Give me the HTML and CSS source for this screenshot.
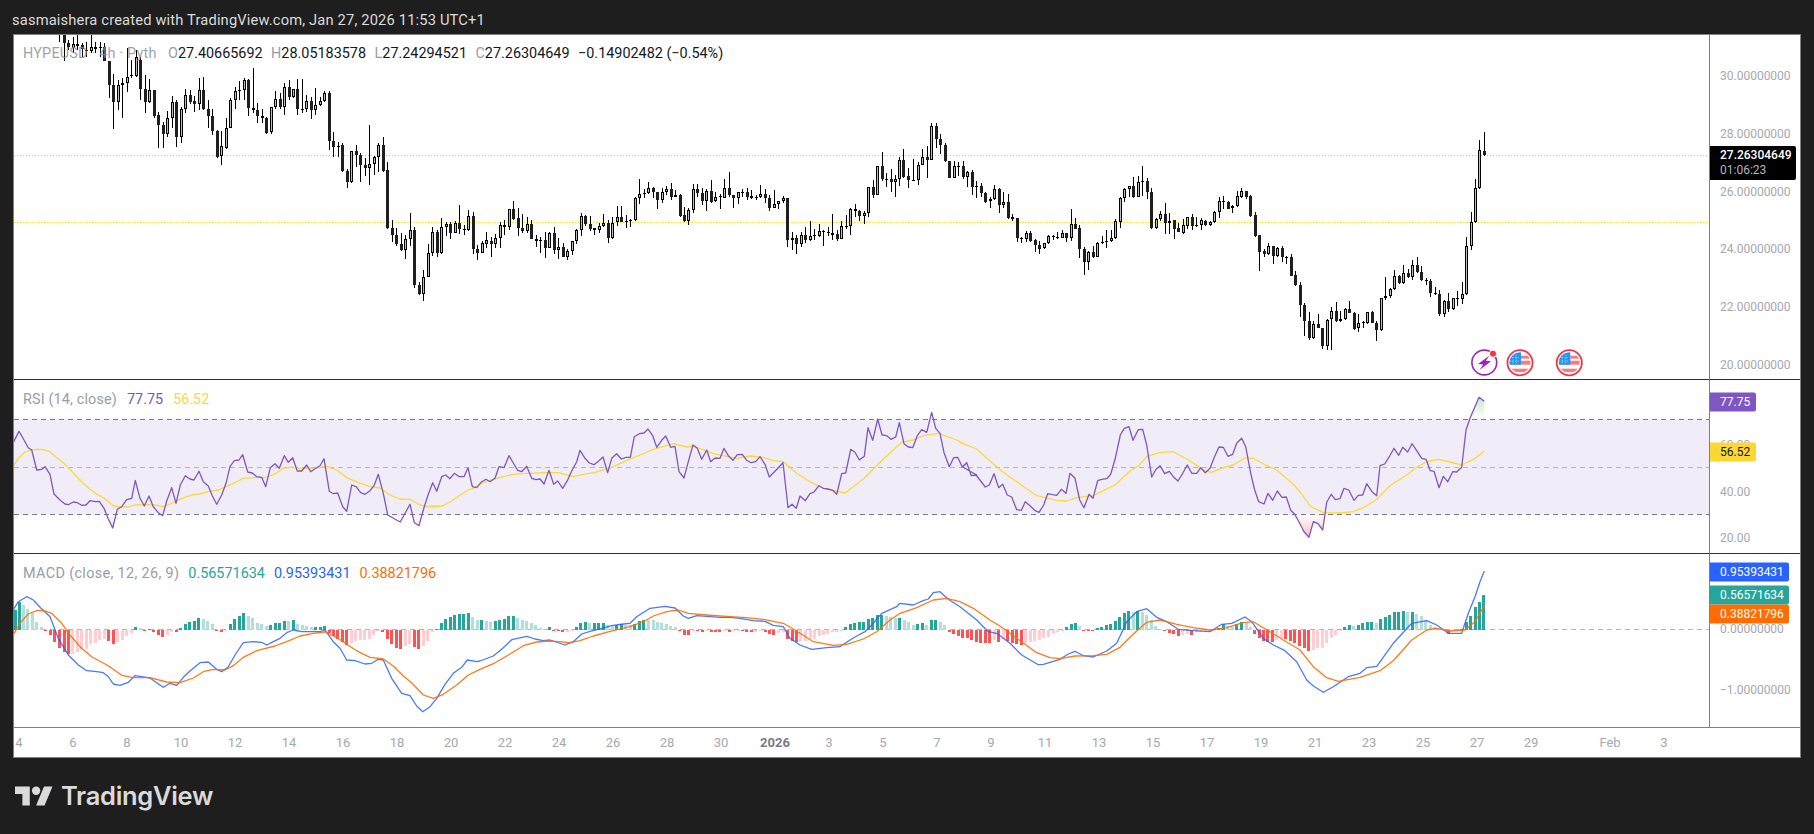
FILE: index.html
```html
<!DOCTYPE html>
<html lang="en">
<head>
<meta charset="utf-8">
<title>HYPEUSD 4h chart</title>
<link rel="stylesheet" href="styles.css">
</head>
<body>
<div class="page">
  <header class="header">sasmaishera created with TradingView.com, Jan 27, 2026 11:53 UTC+1</header>
  <main class="frame">
    <section class="pane pane-main">
      <svg class="plot" viewBox="14 35 1695 344" width="1695" height="344">
        <line class="price-line" x1="14" x2="1709" y1="155.5" y2="155.5"/>
        <line class="level-line" x1="14" x2="1709" y1="222.5" y2="222.5"/>
        <g id="candles"></g>
        <g class="icon-bolt">
          <circle class="bolt-ring" cx="1484.3" cy="362.5" r="12.4"/>
          <path class="bolt-shape" d="M1489.5 355.5 L1478 364 L1483.2 364.4 L1479.5 370 L1491 361.2 L1485.8 360.8 Z"/>
          <circle class="bolt-dot" cx="1493" cy="353.7" r="3.6"/>
        </g>
        <defs>
          <clipPath id="flag-clip"><circle r="10.5"/></clipPath>
          <g id="flag">
            <circle class="flag-ring" r="12.6"/>
            <g clip-path="url(#flag-clip)">
              <rect class="flag-white" x="-11" y="-11" width="22" height="22"/>
              <rect class="flag-red" x="1" y="-7" width="10" height="3"/>
              <rect class="flag-red" x="-11" y="-2" width="22" height="4"/>
              <rect class="flag-red" x="-11" y="6" width="22" height="3.5"/>
              <rect class="flag-blue" x="-11" y="-11" width="12" height="13"/>
              <path class="flag-stars" d="M-7 -8v9M-3.5 -8v9M-10 -5h10M-10 -1.5h10"/>
            </g>
          </g>
        </defs>
        <use href="#flag" x="1520" y="362.7"/>
        <use href="#flag" x="1569.3" y="362.7"/>
      </svg>
      <div class="legend legend-main">
        <span class="mute title">HYPEUSD · 4h · Pyth</span>
        <span class="ohlc"><i>O</i>27.40665692</span>
        <span class="ohlc"><i>H</i>28.05183578</span>
        <span class="ohlc"><i>L</i>27.24294521</span>
        <span class="ohlc"><i>C</i>27.26304649</span>
        <span class="ohlc">−0.14902482 (−0.54%)</span>
      </div>
    </section>
    <aside class="axis axis-main">
      <span class="tick" data-y="75">30.00000000</span>
      <span class="tick" data-y="133">28.00000000</span>
      <span class="tick" data-y="191">26.00000000</span>
      <span class="tick" data-y="248">24.00000000</span>
      <span class="tick" data-y="306">22.00000000</span>
      <span class="tick" data-y="364">20.00000000</span>
      <div class="badge badge-now" data-y="163"><b>27.26304649</b><span>01:06:23</span></div>
    </aside>

    <section class="pane pane-rsi">
      <svg class="plot" viewBox="14 380 1695 173" width="1695" height="173" id="rsi"></svg>
      <div class="legend legend-ind">
        <span class="mute">RSI (14, close)</span>
        <span class="c-purple">77.75</span>
        <span class="c-yellow">56.52</span>
      </div>
    </section>
    <aside class="axis axis-rsi">
      <span class="tick" data-y="397">80.00</span>
      <span class="tick" data-y="444">60.00</span>
      <span class="tick" data-y="491">40.00</span>
      <span class="tick" data-y="537">20.00</span>
      <span class="badge b-short b-purple" data-y="401.5">77.75</span>
      <span class="badge b-short b-yellow" data-y="451.5">56.52</span>
    </aside>

    <section class="pane pane-macd">
      <svg class="plot" viewBox="14 554 1695 173" width="1695" height="173" id="macd"></svg>
      <div class="legend legend-ind">
        <span class="mute">MACD (close, 12, 26, 9)</span>
        <span class="c-teal">0.56571634</span>
        <span class="c-blue">0.95393431</span>
        <span class="c-orange">0.38821796</span>
      </div>
    </section>
    <aside class="axis axis-macd">
      <span class="tick" data-y="628">0.00000000</span>
      <span class="tick" data-y="689">−1.00000000</span>
      <span class="badge b-long b-blue" data-y="571.5">0.95393431</span>
      <span class="badge b-long b-teal" data-y="595">0.56571634</span>
      <span class="badge b-long b-orange" data-y="613.5">0.38821796</span>
    </aside>

    <footer class="times">
      <span data-x="19">4</span><span data-x="73">6</span><span data-x="127">8</span><span data-x="181">10</span>
      <span data-x="235">12</span><span data-x="289">14</span><span data-x="343">16</span><span data-x="397">18</span>
      <span data-x="451">20</span><span data-x="505">22</span><span data-x="559">24</span><span data-x="613">26</span>
      <span data-x="667">28</span><span data-x="721">30</span><span data-x="775" class="year">2026</span><span data-x="829">3</span>
      <span data-x="883">5</span><span data-x="937">7</span><span data-x="991">9</span><span data-x="1045">11</span>
      <span data-x="1099">13</span><span data-x="1153">15</span><span data-x="1207">17</span><span data-x="1261">19</span>
      <span data-x="1315">21</span><span data-x="1369">23</span><span data-x="1423">25</span><span data-x="1477">27</span>
      <span data-x="1531">29</span><span data-x="1610">Feb</span><span data-x="1664">3</span>
    </footer>
  </main>
  <div class="brand">
    <svg class="brand-mark" viewBox="0 4 36 18" width="38" height="20">
      <path d="M14 22H7V11H0V4h14v18zM28 22h-8l7.5-18h8L28 22z"/>
      <circle cx="20" cy="8" r="4"/>
    </svg>
    <span class="brand-name">TradingView</span>
  </div>
</div>
<script src="chart.js"></script>
</body>
</html>
```

FILE: styles.css
```css
* { box-sizing: border-box; }
html, body { margin: 0; height: 100%; }
body { background: #1e1e1e; font-family: Roboto, "Liberation Sans", sans-serif; overflow: hidden; }
.page { display: flex; flex-direction: column; height: 834px; padding: 0 13px; }

.header { height: 34px; padding-top: 11px; color: #dcdcdc; font-size: 14.7px; line-height: 18px; letter-spacing: .16px; white-space: nowrap; margin-left: -1px; }

.frame { width: 1788px; height: 724px; border: 1px solid #808080; background: #fff; display: grid; grid-template-columns: 1695px 91px; grid-template-rows: 345px 174px 174px 29px; }
.pane { position: relative; overflow: hidden; border-bottom: 1px solid #2a2e39; }
.pane-macd { border-bottom-color: #808080; }
.plot { display: block; }
.axis { position: relative; border-left: 1px solid #808080; border-bottom: 1px solid #2a2e39; overflow: hidden; }
.axis-macd { border-bottom-color: #808080; }

.tick { position: absolute; left: 10px; height: 16px; margin-top: 1px; line-height: 16px; font-size: 12px; color: #a6a8b0; transform: translateY(-50%); white-space: nowrap; }
.badge { position: absolute; left: 0; transform: translateY(-50%); font-size: 12px; padding-left: 10px; white-space: nowrap; border-radius: 0 2px 2px 0; }
.badge-now { width: 86px; height: 34px; background: #000; display: flex; flex-direction: column; justify-content: center; line-height: 15px; color: #fff; }
.badge-now b { font-weight: 500; }
.badge-now span { color: #b2b5be; }
.b-short { width: 46px; height: 19px; line-height: 19px; color: #fff; }
.b-long { width: 79px; height: 19px; line-height: 19px; color: #fff; }
.b-purple { background: #7e57c2; }
.b-yellow { background: #fdd835; color: #131722; }
.b-blue { background: #2962ff; }
.b-teal { background: #26a69a; }
.b-orange { background: #ff6d00; }

.legend { position: absolute; left: 9px; display: flex; font-size: 14.4px; line-height: 18px; white-space: nowrap; color: #131722; }
.legend-main { top: 10px; gap: 8.5px; }
.legend-main .title { min-width: 136.5px; letter-spacing: .2px; }
.legend-ind { top: 11px; gap: 10px; }
.pane-macd .legend-ind { gap: 9px; }
.legend-ind .mute { letter-spacing: .15px; }
.pane-macd .legend-ind .mute { letter-spacing: .35px; }
.mute, .ohlc i { color: #9a9ca6; font-style: normal; }
.pane-main .mute { color: rgba(140,143,153,.85); }
.c-purple { color: #7e57c2; }
.c-yellow { color: #fdd835; }
.c-teal { color: #26a69a; }
.c-blue { color: #2962ff; }
.c-orange { color: #ff6d00; }

.times { grid-column: 1 / 3; position: relative; font-size: 13px; color: #a6a8b0; }
.times span { position: absolute; top: 7px; line-height: 16px; transform: translateX(-50%); }
.times .year { font-weight: 700; color: #787b86; }

.brand { display: flex; align-items: center; height: 76px; padding: 0 0 0 2px; color: #dadada; gap: 8px; }
.brand-mark { fill: #dadada; display: block; margin-top: -1px; }
.brand-name { font-family: Inter, "Liberation Sans", sans-serif; font-weight: 600; font-size: 25.5px; letter-spacing: -.3px; margin-top: -1px; }

.price-line { stroke: #bdbdbd; stroke-width: 1; stroke-dasharray: 1 2; }
.level-line { stroke: #ffe600; stroke-width: 1; stroke-dasharray: 1.5 1.5; }
.c-wick, .c-solid { fill: #000; }
.c-down { fill: #1f1f1f; }
.c-up { fill: #000; }
.c-in { fill: #bdbdbd; }
#candles { shape-rendering: crispEdges; }

.bolt-ring { fill: #fff; stroke: #9c27b0; stroke-width: 1.6; }
.bolt-shape { fill: #9c27b0; }
.bolt-dot { fill: #f23645; stroke: #fff; stroke-width: 1; }
.flag-ring { fill: #fff; stroke: #f23645; stroke-width: 1.8; }
.flag-white { fill: #fff; }
.flag-red { fill: #f77c80; }
.flag-blue { fill: #2196f3; }
.flag-stars { stroke: #bbdefb; stroke-width: .9; fill: none; stroke-dasharray: 1 1.5; }

.band { fill: #7e57c2; fill-opacity: .11; }
.dash-strong { stroke: #787b86; stroke-dasharray: 5 4; stroke-width: 1; }
.dash-soft { stroke: #b2b5be; stroke-dasharray: 5 4; stroke-width: 1; }
.l-purple, .l-yellow, .l-blue, .l-orange { fill: none; stroke-linejoin: round; stroke-width: 1.3; }
.l-purple { stroke: #7e57c2; }
.l-yellow { stroke: #fdd835; }
.l-blue { stroke: #2962ff; stroke-opacity: .85; }
.l-orange { stroke: #ff6d00; stroke-opacity: .9; }
.hist { shape-rendering: crispEdges; }
.h0 { fill: #26a69a; }
.h1 { fill: #b2dfdb; }
.h2 { fill: #ff5252; }
.h3 { fill: #ffcdd2; }
.g-over-a { stop-color: #66bb6a; stop-opacity: .35; }
.g-over-b { stop-color: #66bb6a; stop-opacity: 0; }
.g-under-a { stop-color: #ef5350; stop-opacity: 0; }
.g-under-b { stop-color: #ef5350; stop-opacity: .35; }
```

FILE: chart.js
```js
// Candles: x, body top, body bottom, high, low, kind, in the coordinates of four capture strips.
var STRIPS = [
{ox:0,sx:3,oy:30,sy:3,rows:`178 -30 -20 10 35 d
193 10 40 10 92 d
205 40 52 30 60 d
220 43 53 20 70 u
232 43 47 15 60 d
247 45 58 40 80 d
259 60 61 35 80 d
274 50 62 12 70 u
286 50 56 35 70 d
301 52 54 35 80 d
313 52 92 40 92 d
328 92 166 92 205 d
340 166 217 132 297 d
355 166 217 150 240 u
367 160 166 145 265 u
382 140 160 55 185 u
394 135 137 90 145 d
409 80 137 60 140 u
421 90 176 80 210 d
436 176 217 135 250 d
448 181 217 148 220 u
463 181 258 180 265 d
475 256 286 247 355 d
490 286 313 275 353 d
502 265 313 243 322 u
517 217 265 197 295 u
529 217 320 210 350 d
544 238 320 232 340 u
556 196 238 178 250 u
571 196 216 180 222 d
583 214 223 197 245 d
598 181 223 145 240 u
610 181 238 142 240 d
625 238 259 210 293 d
637 259 304 238 315 d
652 304 380 300 385 d
664 349 379 303 404 u
679 295 355 265 358 u
691 211 295 205 295 u
706 184 211 170 237 u
718 181 184 153 210 d
733 151 181 143 210 u
745 151 235 148 257 d
760 235 241 115 250 d
772 241 259 220 278 d
787 259 265 238 278 d
799 265 308 262 313 d
814 232 307 230 313 u
826 208 232 184 238 u
841 208 232 190 238 d
853 172 232 160 255 u
868 172 202 150 210 d
880 178 202 176 205 u
892 178 238 148 255 d
907 238 239 148 250 d
919 214 238 195 245 u
934 214 241 202 268 d
946 226 241 175 255 u
961 214 226 200 228 u
973 190 214 182 215 u
988 190 334 182 360 d
1000 334 352 307 382 d
1015 347 352 337 380 u
1027 346 424 340 427 d
1042 424 457 418 475 d
1054 364 457 364 460 u
1069 364 376 345 410 d
1081 376 406 370 457 d
1096 406 415 385 437 d
1108 403 415 285 465 u
1123 382 403 378 435 u
1135 346 382 340 425 u
1150 346 423 322 425 d
1162 421 595 397 596 d
1177 595 616 570 635 d
1189 616 643 595 648 d
1204 643 661 610 664 d
1216 628 661 615 686 u
1231 601 628 550 647 u
1243 601 764 592 775 d
1258 764 793 755 795 d
1270 740 793 720 812 u
1285 668 740 642 742 u
1297 607 668 592 678 u
1312 607 668 600 680 d
1324 592 670 565 672 u`},
{ox:440,sx:3,oy:110,sy:3,rows:`19 343 352 336 378 u
31 343 368 336 386 d
46 338 368 333 368 u
58 339 358 285 372 d
73 357 359 345 375 d
85 319 359 300 362 u
100 319 418 306 432 d
112 418 428 405 450 d
127 400 428 394 430 u
139 391 401 366 413 u
154 394 403 380 441 d
166 385 403 372 414 u
181 346 385 335 414 u
193 346 352 330 375 d
208 298 352 298 360 u
220 298 326 273 330 d
235 325 355 294 378 d
247 355 362 312 370 d
262 343 362 321 368 u
274 343 388 331 388 d
289 388 394 376 411 d
301 390 391 381 429 d
316 391 413 366 444 d
328 369 413 367 413 u
343 370 421 350 431 d
355 412 421 384 446 u
370 412 442 400 442 d
382 424 442 418 450 u
397 394 424 394 435 u
409 361 394 358 402 u
424 319 361 309 378 u
436 319 343 316 347 d
451 343 356 318 364 d
463 355 361 353 375 d
478 349 361 339 369 u
490 340 349 312 350 u
505 340 385 330 398 d
517 340 385 321 387 u
532 322 337 288 347 u
544 322 337 288 337 d
559 334 335 316 353 d
571 330 331 326 350 d
586 265 331 262 332 u
598 253 265 208 281 u
613 250 253 236 264 d
625 235 250 217 252 u
640 235 247 231 265 d
652 247 271 247 296 d
667 247 271 234 278 u
679 238 247 228 254 u
694 238 262 220 269 d
706 256 262 240 262 u
721 256 317 253 320 d
733 316 334 292 335 d
745 301 334 295 345 u
760 238 301 222 308 u
772 238 250 222 260 d
787 250 274 235 284 d
799 244 274 238 303 u
814 244 277 210 278 d
826 262 274 246 275 u
841 259 261 253 296 d
853 235 265 207 265 u
868 235 256 186 262 d
880 256 265 256 294 d
895 247 265 245 281 u
907 247 248 237 262 d
922 247 262 234 269 d
934 259 265 240 266 d
949 262 263 254 270 d
961 253 262 225 265 u
976 253 265 237 280 d
988 265 295 255 304 d
1003 283 295 240 295 u
1015 274 283 274 296 u
1030 265 274 258 280 u
1042 265 391 265 410 d
1057 385 391 366 420 u
1069 385 401 376 431 d
1084 376 401 366 410 u
1096 376 391 351 399 d
1111 379 391 333 392 u
1123 376 377 357 391 d
1138 364 377 342 380 u
1150 363 364 360 407 d
1165 367 368 351 378 d
1177 370 374 312 389 d
1192 373 386 360 392 d
1204 349 386 333 388 u
1219 349 350 316 356 d
1231 298 349 295 375 u
1246 298 304 282 322 d
1258 304 319 300 333 d
1273 310 319 304 342 u
1285 232 310 232 322 u
1300 232 256 210 263 d
1312 169 256 168 256 u
1327 169 208 127 212 d
1339 208 209 190 230 d`},
{ox:880,sx:2.8,oy:110,sy:3,rows:`31 208 217 178 245 d
43 208 217 196 260 u
55 151 208 142 227 u
67 151 202 118 205 d
81 199 211 175 233 d
93 210 211 148 212 d
107 166 211 157 224 u
118 142 166 118 166 u
132 142 151 108 205 d
144 49 151 40 151 u
158 49 88 40 115 d
169 88 106 72 131 d
183 106 154 100 155 d
194 154 205 154 205 d
208 169 205 152 205 u
219 168 169 157 198 d
233 169 202 154 208 d
245 187 202 184 230 u
259 187 232 181 254 d
270 229 232 212 265 d
284 229 250 220 260 d
295 250 275 247 278 d
309 268 274 262 293 u
320 238 268 226 270 u
334 238 286 235 308 d
345 277 286 247 295 u
360 277 323 252 326 d
371 322 326 313 332 d
384 325 385 325 395 d
396 384 387 380 398 d
410 370 388 362 396 u
421 370 392 364 395 d
435 391 406 388 425 d
446 406 416 392 431 d
460 400 415 400 418 u
472 379 400 376 403 u
486 378 379 374 390 d
497 382 383 366 387 d
511 370 383 361 385 u
522 370 384 369 395 d
536 343 383 297 392 u
547 343 356 324 356 d
558 354 418 345 445 d
572 418 455 412 494 d
584 427 455 424 480 u
598 427 441 408 443 d
609 400 441 397 441 u
623 397 400 378 401 d
634 394 395 360 414 d
648 385 394 360 395 u
659 334 385 328 386 u
673 265 335 262 353 u
684 238 265 235 275 u
698 229 238 228 262 u
709 229 262 202 263 d
724 217 262 198 262 u
735 214 215 168 258 d
749 214 247 205 268 d
760 247 355 235 356 d
774 328 355 325 356 u
785 313 328 304 333 u
799 313 340 280 371 d
810 332 340 308 371 u
824 331 356 330 386 d
835 355 367 340 367 d
849 346 370 327 372 u
860 322 347 320 358 u
874 322 347 312 359 d
885 346 347 322 352 d
899 331 346 325 359 u
910 332 346 331 347 d
925 337 346 333 347 u
936 307 337 304 338 u
950 274 307 260 323 u
961 274 275 258 298 d
975 277 298 272 298 d
986 289 295 285 308 u
1000 259 289 243 292 u
1011 244 261 235 265 u
1025 244 261 242 268 d
1037 259 317 256 320 d
1051 316 378 307 380 d
1062 376 425 375 482 d
1076 424 433 418 442 d
1087 409 433 399 434 u
1101 409 439 407 462 d
1112 415 439 411 440 u
1126 415 442 408 456 d
1137 440 441 437 463 d
1151 442 497 433 497 d
1163 496 526 483 527 d
1176 526 586 517 622 d
1188 586 634 580 678 d
1202 634 683 606 689 d
1213 643 683 634 686 u
1227 643 655 612 655 d
1239 655 707 655 716 d
1252 631 707 628 719 u
1264 604 628 592 719 u
1278 604 634 575 636 d
1289 628 634 604 635 u
1303 598 628 595 629 u
1314 598 610 573 610 d
1328 610 656 605 661 d
1339 640 655 612 665 u
1354 637 638 633 653 d
1365 607 640 605 643 u
1379 607 640 604 640 d
1390 640 661 634 692 d
1404 565 661 565 664 u
1415 559 565 501 569 u
1429 538 559 535 563 u
1440 499 538 481 540 u
1454 499 520 495 523 d
1466 488 520 465 522 u
1480 488 502 477 503 d
1491 466 502 450 510 u
1505 466 487 441 490 d
1516 487 511 468 512 d
1530 510 511 505 525 d
1541 514 550 506 560 d
1555 550 553 532 556 d
1566 553 611 540 617 d`},
{ox:1400,sx:3,oy:100,sy:3,rows:`132 604 641 601 651 u
145 604 628 580 635 d
159 595 628 595 629 u
172 595 598 573 618 d
186 583 598 547 612 u
199 439 583 412 584 u
213 367 439 336 449 u
226 265 367 238 368 u
239 151 265 120 268 u
253 154 166 97 167 d`}
];

function pts(ox, oy, s) {
  return s.trim().split(/\s+/).map(function (p) {
    var a = p.split(',');
    return [ox + a[0] / 3, oy + a[1] / 3];
  });
}
function joined(list) {
  return list.reduce(function (all, one) { return all.concat(one); }, []);
}
function polyStr(p) { return p.map(function (q) { return q[0].toFixed(1) + ',' + q[1].toFixed(1); }).join(' '); }

var RSI = joined([
pts(0,370,`40,218 57,184 72,210 85,233 95,240 110,300 125,298 135,290 150,313 162,372 180,390 195,402 205,404 220,396 232,398 245,406 258,405 270,392 285,395 298,394 312,415 325,447 338,474 352,418 365,410 380,389 395,385 406,331 420,385 433,408 447,378 460,410 475,428 488,437 500,393 515,353 528,400 541,345 556,317 570,327 582,330 597,304 610,335 625,348 637,377 650,403 665,375 678,340 690,290 703,272 717,270 728,254 743,306 757,309 770,320 785,322 797,350 811,293 825,281 838,295 853,257 865,277 878,263 892,303 905,303 920,285 932,305 945,296 960,287 972,266 988,364 1000,371 1013,369 1028,410 1040,424 1055,345 1068,350 1082,368 1095,373 1110,362 1122,347 1135,313 1150,370 1163,435 1175,442 1188,449 1201,456 1216,428 1230,403 1243,458 1257,467 1270,420 1284,375 1298,338 1310,364 1325,320 1337,315 1350,326 1363,310 1378,320 1392,320 1404,293 1417,350 1430,353 1445,335 1458,328 1470,335 1485,325 1497,290`),
pts(480,395,`72,218 87,182 100,204 113,226 125,230 140,214 155,250 168,254 180,252 192,267 207,226 221,268 233,258 248,280 262,257 275,228 290,200 300,166 315,190 328,204 342,209 356,198 369,186 383,233 395,190 410,176 424,192 438,187 451,187 463,125 478,116 492,114 504,102 518,122 530,157 545,136 557,123 572,157 585,154 597,230 612,249 625,200 639,150 652,160 665,193 680,165 692,200 705,189 720,190 732,160 745,182 759,196 772,179 787,178 800,196 813,203 827,200 840,185 855,208 868,246 882,232 895,218 909,203 924,338 936,328 949,340 960,303 976,317 990,296 1002,291 1017,272 1030,280 1044,282 1058,286 1070,298 1085,236 1097,234 1112,163 1125,172 1138,195 1153,184 1164,98 1178,136 1193,72 1206,120 1220,122 1233,133 1247,126 1258,83 1272,146 1285,156 1298,158 1312,122 1325,104 1340,112 1355,52 1367,100 1380,115 1392,173 1408,215 1421,188 1433,187 1447,216 1460,203 1474,242 1490,240`),
pts(960,395,`8,216 20,203 34,242 48,240 62,258 76,276 88,270 102,236 116,278 128,268 142,300 155,306 170,344 184,346 196,320 210,332 224,346 237,352 251,330 263,296 277,299 290,301 304,283 318,295 330,235 345,250 359,315 372,338 387,298 399,310 413,257 425,253 440,251 452,238 466,190 481,120 493,100 507,95 519,136 535,104 548,103 560,150 575,246 587,224 600,212 614,236 628,229 640,245 654,258 668,235 682,210 695,235 710,235 722,218 736,233 750,220 763,187 777,156 790,157 804,184 818,178 830,145 845,130 857,155 872,235 884,285 896,320 912,327 924,295 938,316 952,288 966,307 979,306 992,346 1004,358 1019,385 1032,410 1047,427 1060,380 1074,386 1088,405 1100,322 1114,298 1126,314 1140,311 1152,280 1166,285 1182,316 1195,301 1208,300 1220,266 1236,290 1250,302 1260,212 1274,207 1288,185 1302,160 1316,181 1328,157 1343,171 1356,146 1370,167 1385,190 1398,193 1411,227 1422,229 1437,278 1450,244 1463,260 1478,230 1490,231`),
pts(1400,380,`185,262 198,150 210,115 237,52 253,64`)
]);
var RSI_MA = joined([
pts(0,370,`40,288 55,265 72,248 90,240 110,238 130,239 150,245 170,263 190,278 210,298 230,320 250,340 270,358 290,372 315,386 340,407 360,411 385,411 405,405 430,404 460,404 490,410 510,402 540,388 560,380 580,374 600,372 625,365 655,360 680,349 705,338 730,325 760,323 795,323 825,312 850,295 875,291 900,295 945,294 980,289 1010,300 1040,323 1075,338 1110,350 1140,354 1170,375 1200,387 1230,388 1260,405 1280,410 1300,408 1325,409 1350,396 1380,376 1405,360 1420,355 1450,337`),
pts(480,395,`60,247 100,238 140,235 200,233 235,233 280,245 310,238 345,232 395,217 440,197 480,180 520,163 580,146 620,156 640,153 700,176 770,190 810,183 850,187 880,197 910,200 950,235 990,260 1030,280 1095,294 1150,252 1205,197 1250,155 1265,142 1300,135 1330,122 1375,115 1430,135 1460,150 1490,162`),
pts(960,395,`0,142 50,162 80,190 130,232 170,260 230,302 290,316 320,318 350,308 400,302 430,287 465,270 510,228 535,213 562,184 600,172 640,170 690,197 730,225 755,232 790,218 820,210 855,189 880,190 920,212 950,225 1000,268 1020,290 1050,333 1090,353 1140,354 1180,350 1210,338 1250,313 1290,272`),
pts(1400,380,`0,298 20,285 50,262 80,245 115,238 150,246 185,255 225,236 253,213`)
]);
var MACD_LINE = joined([
pts(0,600,`40,30 55,5 80,-10 100,0 120,22 150,50 175,115 205,165 235,195 260,212 290,215 310,218 325,230 340,252 360,256 385,247 405,227 425,230 450,234 470,248 490,262 510,250 530,256 550,232 570,213 600,188 625,186 650,208 665,215 685,200 705,165 730,128 760,125 785,127 800,135 820,125 840,115 860,98 880,90 905,95 930,95 960,95 975,90 1000,125 1020,145 1040,180 1065,182 1095,192 1115,190 1135,178 1150,180 1175,235 1205,280 1230,287 1250,318 1268,335 1290,320 1310,295 1335,253 1360,220 1385,202 1402,180 1430,185`),
pts(480,590,`0,213 40,198 65,178 95,149 140,139 165,147 190,152 210,150 255,165 280,155 305,132 330,124 365,115 395,107 430,102 450,100 470,80 510,55 555,49 585,54 610,78 625,85 650,77 690,80 720,82 750,82 780,85 820,92 855,94 880,106 910,110 930,145 960,165 995,178 1040,173 1080,170 1110,150 1130,138 1155,125 1175,105 1205,70 1250,50 1260,40 1300,45 1330,32 1345,27 1360,8 1380,5 1405,28`),
pts(960,590,`0,50 50,90 85,125 110,130 150,160 185,195 235,224 250,223 300,208 325,192 345,184 370,197 400,201 440,183 470,160 500,95 530,65 560,56 590,82 620,95 655,118 700,122 750,125 785,103 815,100 855,81 875,95 910,145 940,165 975,182 1010,215 1040,270 1060,288 1090,307 1120,290 1165,260 1200,250 1220,233 1250,229 1300,160`),
pts(1400,380,`0,768 35,730 80,722 110,735 145,760 185,760 205,700 225,650 240,605 253,573`)
]);
var MACD_SIGNAL = joined([
pts(0,600,`40,103 60,70 85,42 110,32 130,31 155,40 185,70 210,105 240,140 275,170 325,197 365,226 400,233 450,233 500,246 540,248 580,234 610,215 640,208 675,210 700,197 730,172 770,152 825,138 860,125 900,108 940,100 975,96 1010,112 1040,133 1075,155 1110,172 1150,177 1180,198 1210,228 1235,248 1270,285 1300,295 1330,283 1370,255 1405,225`),
pts(480,590,`0,238 40,221 90,192 130,167 170,156 210,153 270,158 300,152 340,138 390,124 450,110 490,95 520,78 560,65 595,60 625,70 680,75 750,80 800,83 850,88 910,100 945,120 1000,155 1060,166 1100,163 1150,147 1190,125 1230,90 1260,70 1310,53 1360,30 1400,25`),
pts(960,590,`0,35 40,55 90,90 125,112 170,145 230,188 270,203 300,206 345,198 400,197 440,193 480,172 520,132 560,97 600,90 650,103 700,113 750,120 800,113 850,98 880,95 930,125 970,150 1020,180 1060,230 1100,263 1135,274 1200,262 1260,242 1300,212`),
pts(1400,380,`0,820 35,780 80,750 110,745 150,753 195,750 225,725 253,677`)
]);

// Histogram: x, height above zero (negative below), in strip units.
var HIST = [
{ox:0,s:`45:60 57:84 70:74 83:62 96:49 110:24 124:8 137:-5 150:-16 163:-36 178:-55 192:-66 205:-73 217:-72 232:-66 245:-62 258:-57 272:-42 285:-40 298:-32 312:-28 325:-34 340:-42 352:-38 367:-30 380:-18 393:-10 405:7 420:4 433:-3 447:1 460:-6 475:-15 487:-21 502:-15 515:-6 528:-6 541:4 555:16 568:23 582:25 595:34 609:32 622:27 637:17 650:-1 663:-6 677:-1 690:17 703:32 717:42 730:49 745:41 758:34 772:21 785:16 800:11 812:14 826:19 838:19 853:26 866:25 880:30 893:16 906:13 920:11 933:7 946:7 960:7 973:11 987:-10 1000:-20 1013:-28 1027:-38 1040:-45 1053:-40 1067:-34 1080:-32 1093:-30 1107:-27 1120:-15 1133:-5 1147:-6 1162:-27 1175:-42 1188:-55 1202:-58 1215:-50 1228:-42 1242:-52 1256:-58 1270:-50 1283:-33 1297:-8 1310:2 1323:20 1337:32 1350:38 1364:44 1378:47 1391:48 1405:50 1418:38 1431:30 1445:30 1458:26 1472:24 1485:27 1498:30`},
{ox:480,s:`72:33 85:41 100:41 112:35 126:29 140:26 154:20 166:13 180:6 192:3 208:8 220:-1 235:-3 247:-7 262:-6 275:-5 289:8 302:20 316:23 329:20 343:20 356:20 370:20 383:13 397:10 410:15 424:18 437:15 450:14 464:18 478:26 491:30 505:29 519:28 532:22 545:19 558:16 572:12 586:7 599:-5 613:-17 626:-17 640:-3 653:-5 666:-7 680:-3 693:-6 707:-8 719:-8 733:-4 747:-6 760:-5 774:-3 787:-3 800:-6 814:-8 826:-7 841:-3 855:-8 868:-14 881:-15 895:-11 909:-8 923:-27 936:-35 950:-36 961:-35 976:-33 990:-28 1003:-27 1017:-20 1030:-15 1043:-12 1057:-8 1070:-7 1083:-1 1097:9 1111:18 1124:20 1138:24 1150:24 1165:33 1178:35 1192:44 1205:44 1218:40 1232:37 1245:34 1258:34 1272:28 1285:22 1300:14 1312:18 1327:20 1340:15 1355:28 1367:29 1380:22 1394:14 1408:-8 1421:-12 1435:-19 1448:-24 1462:-25 1475:-32 1489:-37`},
{ox:960,s:`62:-39 75:-40 88:-40 102:-32 115:-37 129:-27 142:-35 157:-39 170:-42 184:-45 197:-40 211:-38 224:-35 238:-31 251:-26 265:-22 279:-14 292:-8 306:-3 320:7 333:16 346:19 358:10 370:-1 385:-2 397:-3 411:4 425:8 439:13 452:16 466:26 478:39 492:50 505:55 519:53 532:56 547:52 560:43 573:28 587:12 600:3 613:-3 627:-9 641:-12 655:-20 668:-17 682:-13 695:-15 708:-8 722:-6 735:-5 749:-4 762:-2 775:5 790:16 803:10 816:8 830:18 845:22 858:20 871:8 884:-12 897:-25 910:-33 923:-36 937:-38 950:-30 964:-26 977:-28 990:-35 1004:-40 1018:-48 1032:-56 1045:-63 1059:-60 1073:-55 1087:-54 1100:-40 1113:-25 1127:-15 1141:-5 1154:8 1168:15 1181:11 1195:15 1208:19 1221:23 1235:24 1249:21 1260:32 1275:39 1288:44 1302:53 1316:53 1330:55 1343:53 1358:53 1369:48 1384:40 1397:28 1411:15 1424:8 1438:3 1450:2 1465:-12 1478:-4 1491:-2`},
{ox:1400,s:`185:1 198:22 211:40 226:68 239:83 251:103`}
];

function drawCandles() {
  var out = '';
  STRIPS.forEach(function (st) {
    st.rows.split('\n').forEach(function (row) {
      var c = row.trim().split(/\s+/);
      var x = Math.round(st.ox + c[0] / st.sx - 0.5);
      var y = function (v) { return st.oy + v / st.sy; };
      var t = Math.round(y(+c[1])), b = Math.round(y(+c[2]));
      var h = Math.round(y(+c[3])), l = Math.round(y(+c[4]));
      if (b - t < 1) b = t + 1;
      out += '<rect class="c-wick" x="' + x + '" y="' + h + '" width="1" height="' + Math.max(l - h, 1) + '"/>';
      var thin = b - t <= 2;
      out += '<rect class="' + (c[5] === 'u' || thin ? 'c-up' : 'c-down') + '" x="' + (x - 1) + '" y="' + t + '" width="3" height="' + (b - t) + '"/>';
      if (c[5] === 'u' && !thin) {
        out += '<rect class="c-in" x="' + x + '" y="' + (t + 1) + '" width="1" height="' + (b - t - 2) + '"/>';
      }
    });
  });
  document.getElementById('candles').innerHTML = out;
}

function drawRsi() {
  var top = 419.5, bottom = 514.5, mid = 467.5;
  var first = RSI[0][0], last = RSI[RSI.length - 1][0];
  var poly = polyStr(RSI);
  var over = first + ',' + top + ' ' + poly + ' ' + last + ',' + top;
  var under = first + ',' + bottom + ' ' + poly + ' ' + last + ',' + bottom;
  document.getElementById('rsi').innerHTML =
    '<defs>' +
    '<linearGradient id="g-over" gradientUnits="userSpaceOnUse" x1="0" x2="0" y1="397" y2="419"><stop class="g-over-a" offset="0"/><stop class="g-over-b" offset="1"/></linearGradient>' +
    '<linearGradient id="g-under" gradientUnits="userSpaceOnUse" x1="0" x2="0" y1="514" y2="537"><stop class="g-under-a" offset="0"/><stop class="g-under-b" offset="1"/></linearGradient>' +
    '<clipPath id="c-over"><rect x="14" y="380" width="1695" height="' + (top - 380) + '"/></clipPath>' +
    '<clipPath id="c-under"><rect x="14" y="' + bottom + '" width="1695" height="40"/></clipPath>' +
    '</defs>' +
    '<rect class="band" x="14" y="' + top + '" width="1695" height="' + (bottom - top) + '"/>' +
    '<line class="dash-strong" x1="14" x2="1709" y1="' + top + '" y2="' + top + '"/>' +
    '<line class="dash-soft" x1="14" x2="1709" y1="' + mid + '" y2="' + mid + '"/>' +
    '<line class="dash-strong" x1="14" x2="1709" y1="' + bottom + '" y2="' + bottom + '"/>' +
    '<polygon points="' + over + '" fill="url(#g-over)" clip-path="url(#c-over)"/>' +
    '<polygon points="' + under + '" fill="url(#g-under)" clip-path="url(#c-under)"/>' +
    '<polyline class="l-yellow" points="' + polyStr(RSI_MA) + '"/>' +
    '<polyline class="l-purple" points="' + poly + '"/>';
}

function drawMacd() {
  var zero = 629.5, bars = '', prev = 0;
  HIST.forEach(function (seg) {
    seg.s.split(' ').forEach(function (p) {
      var a = p.split(':');
      var x = Math.round(seg.ox + a[0] / 3 - 1.5);
      var v = +a[1], hgt = Math.abs(v) / 3;
      var cls = v >= 0 ? (v >= prev ? 'h0' : 'h1') : (v <= prev ? 'h2' : 'h3');
      var y = v >= 0 ? zero - hgt : zero;
      bars += '<rect class="' + cls + '" x="' + x + '" y="' + y.toFixed(1) + '" width="3" height="' + Math.max(hgt, 1).toFixed(1) + '"/>';
      prev = v;
    });
  });
  document.getElementById('macd').innerHTML =
    '<line class="dash-soft" x1="14" x2="1709" y1="' + zero + '" y2="' + zero + '"/>' +
    '<g class="hist">' + bars + '</g>' +
    '<polyline class="l-blue" points="' + polyStr(MACD_LINE) + '"/>' +
    '<polyline class="l-orange" points="' + polyStr(MACD_SIGNAL) + '"/>';
}

function placeLabels() {
  document.querySelectorAll('[data-y]').forEach(function (el) {
    var box = el.parentElement.getBoundingClientRect();
    el.style.top = (el.dataset.y - box.top) + 'px';
  });
  document.querySelectorAll('[data-x]').forEach(function (el) {
    var box = el.parentElement.getBoundingClientRect();
    el.style.left = (el.dataset.x - box.left) + 'px';
  });
}

drawCandles();
drawRsi();
drawMacd();
placeLabels();
```
